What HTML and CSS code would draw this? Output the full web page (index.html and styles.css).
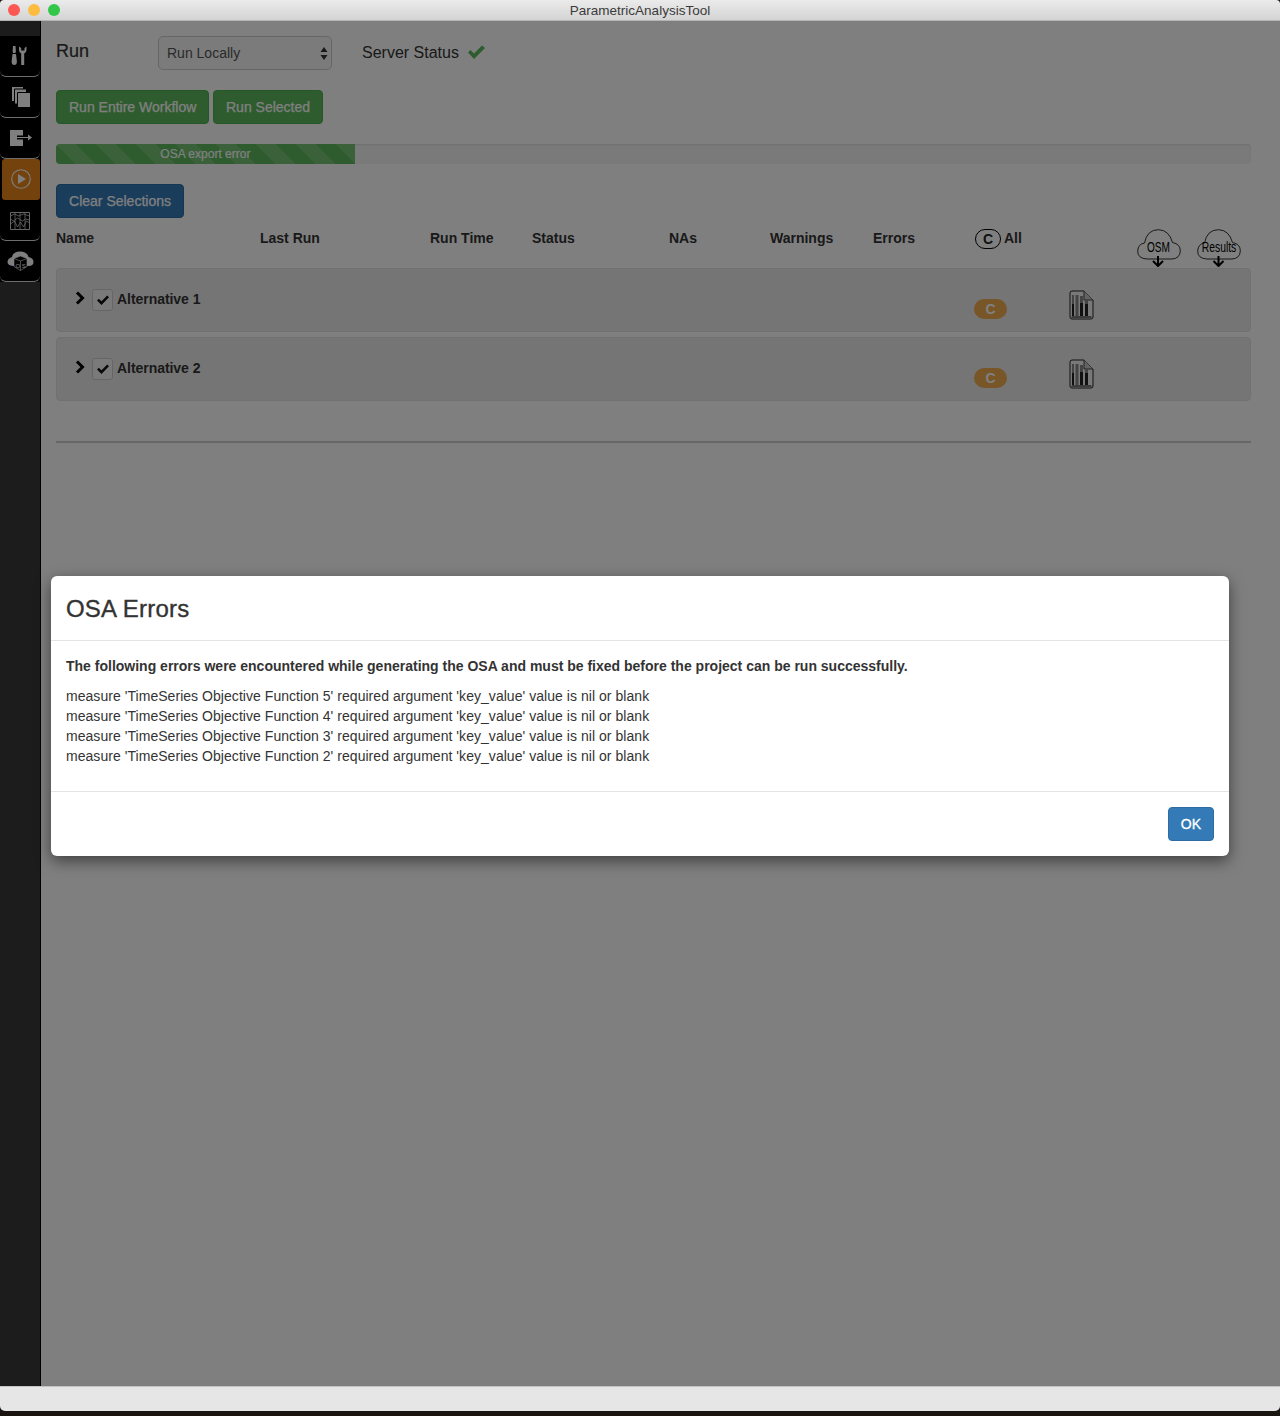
FILE: index.html
```html
<!DOCTYPE html>
<html lang="en">
<head>
<meta charset="utf-8">
<title>ParametricAnalysisTool</title>
<link rel="stylesheet" href="styles.css">
</head>
<body>
<div class="window">
  <header class="titlebar">
    <div class="lights"><span class="light red"></span><span class="light yellow"></span><span class="light green"></span></div>
    <span class="title">ParametricAnalysisTool</span>
  </header>
  <div class="app">
    <nav class="sidebar">
      <div class="nav-group">
      <a class="nav-item item-tools">
        <svg width="16" height="19" viewBox="0 0 16 19"><path fill="#fff" d="M2 0h2.500l.4 5.500-.5 1.500H2.100l-.5-1.500zM1.500 8h3.500l.9 7.500Q5.900 19 3.250 19T.6 15.500z"/><path fill="#fff" d="M8 .5v3.500q0 2.800 2.200 3.500V19h3V7.500q2.300-.7 2.300-3.500V.5l-2 1.500v2.500h-3.300V2z"/></svg>
      </a>
      <a class="nav-item item-pages">
        <svg width="20" height="22" viewBox="0 0 20 22"><path fill="#fff" stroke="#000" d="M.5.500h12v15H.5z"/><path fill="#fff" stroke="#000" d="M3.500 3h12v15h-12z"/><path fill="#fff" stroke="#000" d="M6.500 6.500h13v15h-13z"/></svg>
      </a>
      <a class="nav-item item-export">
        <svg width="22" height="16" viewBox="0 0 22 16"><path fill="#fff" d="M0 0h13v16H0z"/><path fill="#000" d="M7 5.500h11v4H7z"/><path fill="#fff" d="M7 7h11V4.500l4 3-4 3V8H7z"/></svg>
      </a>
      <a class="nav-item active">
        <svg width="20" height="20" viewBox="0 0 20 20"><circle cx="10" cy="10" r="9.300" fill="none" stroke="#fff" stroke-width="1.100"/><path fill="#fff" d="M7 5l8 5-8 5z"/></svg>
      </a>
      <a class="nav-item item-chart">
        <svg width="20" height="18" viewBox="0 0 20 18" fill="none" stroke="#ccc"><path d="M.5.500h19v17H.5z"/><path d="M.5 4l4-2 4 2 5-2 6 2M.5 7l3 2 4-3 5 3 3-2 4 1M.5 12l4-3 3 6 3-5 3 5 3-6 3 2M5 .500v17M10 .500v17M15 .500v17" stroke-width=".8"/></svg>
      </a>
      <a class="nav-item item-cloud">
        <svg width="27" height="20" viewBox="0 0 27 20"><path fill="#fff" d="M6 15q-5.500-.5-5.500-4T5 6Q6 .5 13 .5T21.500 6q5 1 5 5t-5 4z"/><path fill="#000" stroke="#fff" stroke-width=".6" d="M13.500 5l6.500 2.500v8L13.500 19.500 7 15.500v-8z"/><path fill="none" stroke="#fff" stroke-width=".6" d="M7 7.500l6.500 2.500 6.500-2.500M13.500 10v9.500"/><text x="8.500" y="16.500" class="cube-text">O</text><text x="14.800" y="16.500" class="cube-text">S</text></svg>
      </a>
      </div>
    </nav>
    <main class="content">
      <div class="run-bar">
        <h4 class="run-title">Run</h4>
        <div class="select"><span>Run Locally</span>
          <svg width="8" height="13" viewBox="0 0 8 13"><path fill="#333" d="M4 0l3.500 5H.5zM4 13L.5 8h7z"/></svg>
        </div>
        <div class="server-status">Server Status
          <svg width="17" height="14" viewBox="0 0 17 14"><path fill="#5cb85c" d="M0 7.500l2.500-2.500 3.500 3.500L14 .5l3 2.500L6 14z"/></svg>
        </div>
      </div>
      <div class="actions">
        <button class="btn btn-success">Run Entire Workflow</button>
        <button class="btn btn-success">Run Selected</button>
      </div>
      <div class="progress">
        <div class="progress-bar" style="width:25%">OSA export error</div>
      </div>
      <button class="btn btn-primary">Clear Selections</button>
      <div class="table-head grid">
        <span>Name</span><span>Last Run</span><span>Run Time</span><span>Status</span><span>NAs</span><span>Warnings</span><span>Errors</span>
        <span class="all"><i class="c-outline">C</i>All</span>
        <span class="downloads">
          <svg width="44" height="38" viewBox="0 0 44 38"><path class="cloud" d="M10 30Q.5 29.500.7 22 1 15 7.500 14 10 .7 21.500.7 32 1 35.500 13.500 43.500 15 43.300 22 43 29.500 35 30z"/><text class="cloud-text" transform="translate(21.500 23) scale(.72 1)" text-anchor="middle">OSM</text><path class="arrow" d="M21 27v10M16 32l5 5 5-5"/></svg>
          <svg width="44" height="38" viewBox="0 0 44 38"><path class="cloud" d="M10 30Q.5 29.500.7 22 1 15 7.500 14 10 .7 21.500.7 32 1 35.500 13.500 43.500 15 43.300 22 43 29.500 35 30z"/><text class="cloud-text" transform="translate(22 23) scale(.74 1)" text-anchor="middle">Results</text><path class="arrow" d="M21.500 27v10M16.500 32l5 5 5-5"/></svg>
        </span>
      </div>
      <section class="panel grid">
        <div class="alt-name">
          <svg class="chevron" width="10" height="14" viewBox="0 0 10 14"><path fill="none" stroke="#000" stroke-width="3" d="M2 1.500L7.500 7 2 12.500"/></svg>
          <span class="checkbox"><svg width="12" height="10" viewBox="0 0 12 10"><path fill="#111" d="M0 5.500l1.800-1.800L4.500 6.300 10.200.5 12 2.300 4.500 10z"/></svg></span>
          <span class="alt-label">Alternative 1</span>
        </div>
        <span class="pill">C</span>
        <svg class="doc" width="25" height="30" viewBox="0 0 25 30"><path fill="#f2f2f2" stroke="#222" d="M1 3q0-2 2-2h12l9 9v17q0 2-2 2H3q-2 0-2-2z"/><path fill="#c8c8c8" stroke="#444" d="M15 1v9h9"/><path fill="#888" d="M3 5h2v21H3zM6.500 5h3v21h-3zM11 6h3v20h-3zM16 10h3v16h-3z"/><path fill="#222" d="M3 14h2v12H3zM11 13h3v13h-3zM16 14h3v12h-3z"/><path fill="#000" d="M2.500 26.500h20v1h-20z"/></svg>
      </section>
      <section class="panel grid">
        <div class="alt-name">
          <svg class="chevron" width="10" height="14" viewBox="0 0 10 14"><path fill="none" stroke="#000" stroke-width="3" d="M2 1.500L7.500 7 2 12.500"/></svg>
          <span class="checkbox"><svg width="12" height="10" viewBox="0 0 12 10"><path fill="#111" d="M0 5.500l1.800-1.800L4.500 6.300 10.200.5 12 2.300 4.500 10z"/></svg></span>
          <span class="alt-label">Alternative 2</span>
        </div>
        <span class="pill">C</span>
        <svg class="doc" width="25" height="30" viewBox="0 0 25 30"><path fill="#f2f2f2" stroke="#222" d="M1 3q0-2 2-2h12l9 9v17q0 2-2 2H3q-2 0-2-2z"/><path fill="#c8c8c8" stroke="#444" d="M15 1v9h9"/><path fill="#888" d="M3 5h2v21H3zM6.500 5h3v21h-3zM11 6h3v20h-3zM16 10h3v16h-3z"/><path fill="#222" d="M3 14h2v12H3zM11 13h3v13h-3zM16 14h3v12h-3z"/><path fill="#000" d="M2.500 26.500h20v1h-20z"/></svg>
      </section>
      <hr class="rule">
    </main>
  </div>
  <footer class="statusbar"></footer>
  <div class="desktop"></div>
  <div class="backdrop"></div>
  <div class="modal">
    <div class="modal-header"><h4>OSA Errors</h4></div>
    <div class="modal-body">
      <p class="lead-text">The following errors were encountered while generating the OSA and must be fixed before the project can be run successfully.</p>
      <p class="err">measure 'TimeSeries Objective Function 5' required argument 'key_value' value is nil or blank</p>
      <p class="err">measure 'TimeSeries Objective Function 4' required argument 'key_value' value is nil or blank</p>
      <p class="err">measure 'TimeSeries Objective Function 3' required argument 'key_value' value is nil or blank</p>
      <p class="err">measure 'TimeSeries Objective Function 2' required argument 'key_value' value is nil or blank</p>
    </div>
    <div class="modal-footer"><button class="btn btn-ok">OK</button></div>
  </div>
</div>
</body>
</html>
```

FILE: styles.css
```css
* { box-sizing: border-box; }
html, body { margin: 0; padding: 0; height: 1416px; overflow: hidden; }
body { font-family: "Liberation Sans", Arial, sans-serif; font-size: 14px; line-height: 20px; color: #333; background: #1a1410; }

.window { position: relative; width: 1280px; height: 1416px; display: flex; flex-direction: column; }

.titlebar { position: relative; z-index: 3; height: 21px; flex: none; display: flex; align-items: center; justify-content: center; background: linear-gradient(#ebebeb, #d4d4d4); border-bottom: 1px solid #b4b4b4; border-radius: 4px 4px 0 0; }
.lights { position: absolute; left: 8px; top: 4px; display: flex; gap: 8px; }
.light { width: 12px; height: 12px; border-radius: 50%; }
.red { background: #fc5753; }
.yellow { background: #fdbc40; }
.green { background: #33c748; }
.title { font-size: 13.500px; color: #3a3a3a; line-height: 20px; margin-top: 1px; }

.app { height: 1365px; flex: none; display: flex; background: #fff; }

.sidebar { width: 41px; flex: none; background: #383838; border-right: 1px solid #000; padding-top: 15px; }
.nav-group { background: #000; display: flex; flex-direction: column; }
.nav-item { height: 41px; flex: none; width: 40px; display: flex; align-items: center; justify-content: center; background: #000; border-bottom: 1px solid #ddd; border-radius: 0 0 6px 6px; }
.nav-item.active { width: 38px; margin-left: 2px; background: #e8841a; border-bottom: 0; border-radius: 3px; padding-bottom: 1px; }
.item-tools { padding: 0 2px 1px 0; }
.item-pages { padding: 0 0 0 2px; }
.item-export { padding: 0 0 0 2px; }
.item-chart { padding: 2px 0 0; }
.item-cloud { padding: 0 0 0 1px; }

.content { flex: 1; padding: 15px 29px 0 15px; min-width: 0; }

.run-bar { display: flex; align-items: flex-start; height: 34px; }
.run-title { margin: 5px 0 0; width: 102px; font-size: 18px; font-weight: 400; line-height: 20px; -webkit-text-stroke: .2px #333; }
.select { width: 174px; height: 34px; display: flex; align-items: center; justify-content: space-between; padding: 0 3px 0 8px; border: 1px solid #ccc; border-radius: 5px; color: #555; background: #f6f6f6; }
.server-status { margin: 6px 0 0 30px; font-size: 16px; line-height: 22px; display: flex; align-items: flex-start; gap: 9px; }
.server-status svg { margin-top: 3px; }

.actions { display: flex; gap: 4px; margin-top: 20px; }
.btn { height: 34px; padding: 0 12px; font: 14px/20px "Liberation Sans", Arial, sans-serif; color: #fff; border: 1px solid transparent; border-radius: 4px; display: block; white-space: nowrap; -webkit-text-stroke: .25px #fff; }
.btn-success { background: #5cb85c; border-color: #4cae4c; }
.btn-primary { background: #337ab7; border-color: #2e6da4; }
.btn-ok { background: #337ab7; border-color: #2e6da4; -webkit-text-stroke: .3px #fff; padding: 0 12px; }
.actions .btn:first-child { width: 153px; }
.actions .btn:last-child { width: 110px; }

.progress { height: 20px; margin: 20px 0 20px; background: #f5f5f5; border-radius: 4px; overflow: hidden; box-shadow: inset 0 1px 2px rgba(0,0,0,.1); }
.progress-bar { height: 20px; font-size: 12px; line-height: 20px; color: #fff; text-align: center; background-color: #5cb85c; background-image: linear-gradient(45deg, rgba(255,255,255,.15) 25%, transparent 25%, transparent 50%, rgba(255,255,255,.15) 50%, rgba(255,255,255,.15) 75%, transparent 75%, transparent); background-size: 40px 40px; -webkit-text-stroke: .2px #fff; }

.progress + .btn { width: 128px; }

.grid { display: grid; grid-template-columns: 204px 170px 102px 137px 101px 103px 102px 94px 68px 1fr; }
.table-head { height: 50px; font-weight: 700; padding-top: 10px; align-items: start; }
.all { display: flex; align-items: center; gap: 3px; white-space: nowrap; }
.c-outline { width: 26px; height: 20px; display: block; margin-bottom: -1px; border: 1.500px solid #000; border-radius: 10px; font-style: normal; font-weight: 700; text-align: center; line-height: 18px; color: #222; }
.downloads { grid-column: 9 / 11; display: flex; gap: 16px; margin: 1px 0 0 68px; height: 38px; }
.cloud { fill: #fff; stroke: #333; stroke-width: 1; }
.cloud-text { font: 14px "Liberation Sans", Arial, sans-serif; fill: #000; }
.arrow { fill: none; stroke: #000; stroke-width: 2; }
.cube-text { font: 6px "Liberation Sans", Arial, sans-serif; fill: #fff; }

.panel { height: 64px; margin-bottom: 5px; background: #ebebeb; border: 1px solid #e3e3e3; border-radius: 4px; }
.alt-name { grid-column: 1 / 8; display: flex; align-items: flex-start; padding: 20px 0 0 19px; margin-left: -1px; }
.chevron { margin-top: 2px; margin-right: 7px; }
.checkbox { width: 21px; height: 22px; margin-right: 4px; display: flex; align-items: center; justify-content: center; background: #f5f5f5; border: 1px solid #ccc; border-radius: 3px; }
.alt-label { font-weight: 700; color: #333; line-height: 20px; letter-spacing: -.05px; }
.pill { grid-column: 8; width: 33px; height: 20px; margin-top: 30px; margin-left: -2px; background: #f0ad4e; border-radius: 10px; color: #fff; font-weight: 700; text-align: center; line-height: 20px; }
.doc { grid-column: 9; margin: 21px 0 0 -1px; }

.rule { height: 2px; margin: 40px 0 0; border: 0; background: #ccc; }

.statusbar { height: 25px; flex: none; background: #e6e6e6; border-top: 1px solid #c4c4c4; position: relative; z-index: 3; border-radius: 0 0 5px 5px; }
.desktop { flex: 1; background: #1a1410; position: relative; z-index: 3; }

.backdrop { position: absolute; left: 0; right: 0; top: 21px; height: 1365px; background: rgba(0,0,0,.5); z-index: 2; }

.modal { position: absolute; left: 51px; top: 576px; width: 1178px; height: 280px; z-index: 4; background: #fff; border-radius: 6px; box-shadow: 0 5px 15px rgba(0,0,0,.5); display: flex; flex-direction: column; }
.modal-header { height: 65px; flex: none; padding: 15px; border-bottom: 1px solid #e5e5e5; }
.modal-header h4 { margin: 0; font-size: 24px; font-weight: 400; -webkit-text-stroke: .35px #333; letter-spacing: .2px; line-height: 36px; color: #333; }
.modal-body { flex: 1; padding: 15px; }
.modal-body p { margin: 0; }
.err { letter-spacing: .045px; }
.lead-text { font-weight: 700; margin-bottom: 10px !important; }
.modal-footer { height: 65px; flex: none; padding: 15px; border-top: 1px solid #e5e5e5; display: flex; justify-content: flex-end; }
```
